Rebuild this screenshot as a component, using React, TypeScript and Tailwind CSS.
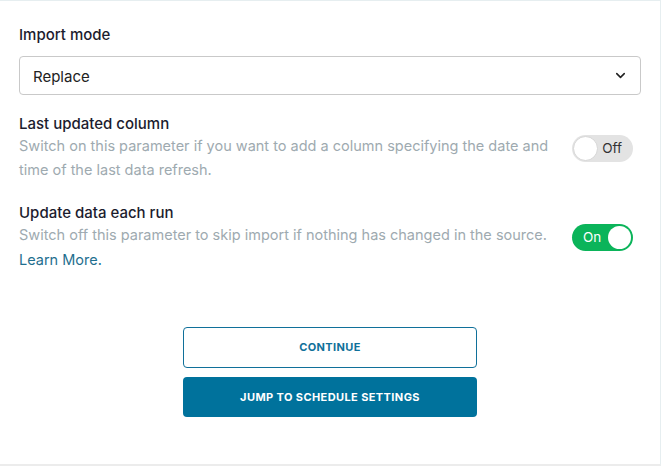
import { ChevronDown } from 'lucide-react';

const Toggle = ({ on }: { on: boolean }) => {
  if (on) {
    return (
      <div className="w-[61px] h-[27px] rounded-full bg-[#0bb45a] flex items-center justify-between pl-[11px] pr-[2px] shrink-0">
        <span className="text-[13.5px] text-white">On</span>
        <span className="w-[23px] h-[23px] rounded-full bg-white"></span>
      </div>
    );
  }
  return (
    <div className="w-[61px] h-[27px] rounded-full bg-[#e3e3e3] flex items-center justify-between pl-[1px] pr-[11px] shrink-0">
      <span className="w-[25px] h-[25px] rounded-full bg-white border border-[#d6d6d6]"></span>
      <span className="text-[13.5px] text-[#333]">Off</span>
    </div>
  );
};

const App = () => {
  return (
    <div className="w-[662px] h-[466px] bg-white font-['Inter',sans-serif]">
      <div className="w-[661px] h-[466px] border-t border-r border-b-2 border-t-[#e6eef0] border-r-[#e6eef0] border-b-[#ececec] px-[19px] pt-[24px]">
        <div className="text-[15px] font-medium text-[#1c1c2e] leading-[20px]">Import mode</div>
        <div className="mt-[11px] w-[622px] h-[39px] border border-[#c9c9c9] rounded-[4px] flex items-center justify-between pl-[13px] pr-[12px]">
          <span className="text-[15px] text-[#222] pt-[3px]">Replace</span>
          <ChevronDown className="w-[15px] h-[15px] text-[#222]" strokeWidth={2.5} />
        </div>

        <div className="mt-[19px] flex items-center justify-between pr-[8px]">
          <div className="w-[540px]">
            <div className="text-[15px] font-medium text-[#1c1c2e] leading-[20px]">Last updated column</div>
            <div className="text-[14.5px] text-[#9eaab0] leading-[24px]">
              Switch on this parameter if you want to add a column specifying the date and time of the last data refresh.
            </div>
          </div>
          <Toggle on={false} />
        </div>

        <div className="mt-[21px] flex items-center justify-between pr-[8px]">
          <div className="w-[540px]">
            <div className="text-[15px] font-medium text-[#1c1c2e] leading-[20px]">Update data each run</div>
            <div className="text-[14.5px] text-[#9eaab0] leading-[24px]">
              Switch off this parameter to skip import if nothing has changed in the source.
            </div>
            <div className="text-[14.5px] text-[#1f6f8f] leading-[24px] pt-[1px]">Learn More.</div>
          </div>
          <Toggle on={true} />
        </div>

        <div className="mt-[55px] flex flex-col items-center gap-[9px]">
          <button className="w-[294px] h-[41px] border border-[#10709a] rounded-[4px] text-[11px] font-bold tracking-[0.4px] text-[#10709a]">
            CONTINUE
          </button>
          <button className="w-[294px] h-[40px] bg-[#00729c] rounded-[4px] text-[11px] font-bold tracking-[0.4px] text-white">
            JUMP TO SCHEDULE SETTINGS
          </button>
        </div>
      </div>
    </div>
  );
};

export default App;
